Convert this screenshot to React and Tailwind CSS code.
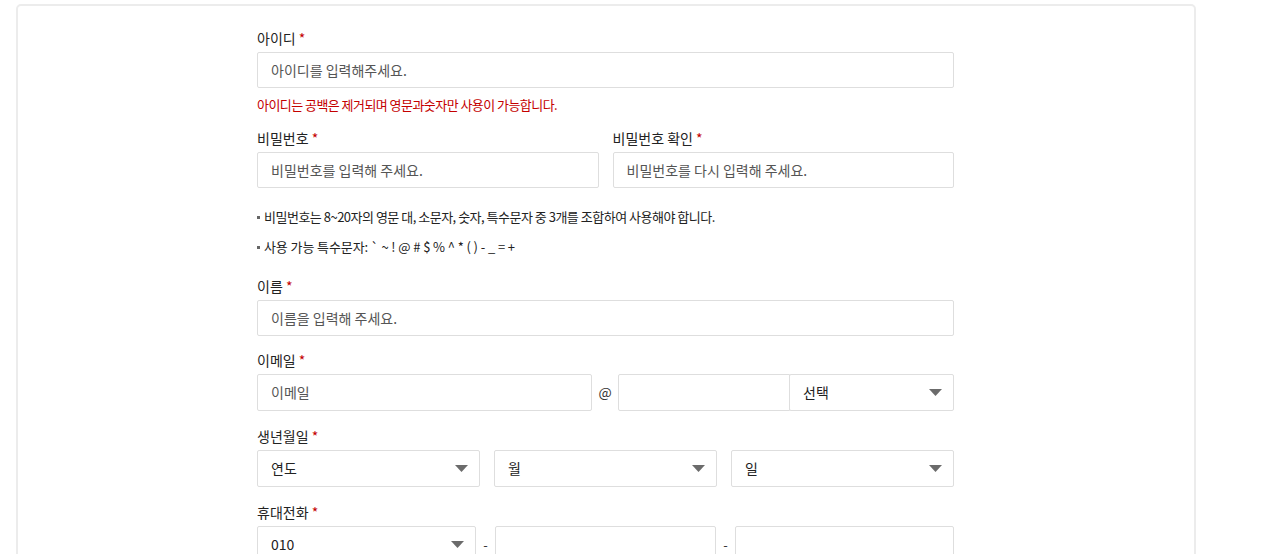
import React from "react";

const FONT = { fontFamily: '"Noto Sans CJK KR", "Noto Sans", sans-serif' };

function Label({ children }) {
  return (
    <div className="mb-1 h-5 text-[14px] leading-5 font-normal text-[#222]">
      {children} <span className="text-[#c40000]">*</span>
    </div>
  );
}

function TextBox({ placeholder = "", className = "h-9" }) {
  return (
    <div
      className={`flex items-center rounded-[2px] border border-[#dedede] bg-white px-[13px] text-[14px] text-[#555] ${className}`}
    >
      {placeholder}
    </div>
  );
}

function SelectBox({ value, className = "" }) {
  return (
    <div
      className={`flex h-[37px] items-center justify-between rounded-[2px] border border-[#dedede] bg-white pl-[13px] pr-[11px] text-[14px] text-[#222] ${className}`}
    >
      <span>{value}</span>
      <svg width="13" height="7" viewBox="0 0 13 7" aria-hidden="true">
        <path d="M0 0h13L6.5 7z" fill="#6b6b6b" />
      </svg>
    </div>
  );
}

function Note({ children, className = "tracking-[-0.5px]" }) {
  return (
    <div className={`flex h-5 items-center gap-[4px] text-[13px] leading-5 text-[#222] ${className}`}>
      <span className="h-[3px] w-[3px] bg-[#666]" />
      <span>{children}</span>
    </div>
  );
}

export default function App() {
  return (
    <div className="min-h-[554px] bg-white px-4 pt-1" style={FONT}>
      <div className="w-[1180px] rounded-[5px] border-2 border-[#ececec] bg-white pt-[22px] pb-10">
        <div className="ml-[239px] w-[697px]">
          <Label>아이디</Label>
          <TextBox placeholder="아이디를 입력해주세요." />
          <div className="mt-[7px] h-5 text-[13px] leading-5 tracking-[-0.55px] text-[#c40000]">
            아이디는 공백은 제거되며 영문과숫자만 사용이 가능합니다.
          </div>

          <div className="mt-[13px] grid grid-cols-2 gap-[14px]">
            <div>
              <Label>비밀번호</Label>
              <TextBox placeholder="비밀번호를 입력해 주세요." />
            </div>
            <div>
              <Label>비밀번호 확인</Label>
              <TextBox placeholder="비밀번호를 다시 입력해 주세요." />
            </div>
          </div>

          <div className="mt-[19px] flex flex-col gap-[10px]">
            <Note>비밀번호는 8~20자의 영문 대, 소문자, 숫자, 특수문자 중 3개를 조합하여 사용해야 합니다.</Note>
            <Note className="tracking-[-0.1px]">사용 가능 특수문자: ` ~ ! @ # $ % ^ * ( ) - _ = +</Note>
          </div>

          <div className="mt-[19px]">
            <Label>이름</Label>
            <TextBox placeholder="이름을 입력해 주세요." />
          </div>

          <div className="mt-[14px]">
            <Label>이메일</Label>
            <div className="flex items-center">
              <TextBox placeholder="이메일" className="h-[37px] w-[335px]" />
              <span className="w-[26px] text-center text-[14px] text-[#333]">@</span>
              <TextBox className="h-[37px] flex-1 rounded-r-none" />
              <SelectBox value="선택" className="-ml-px w-[165px]" />
            </div>
          </div>

          <div className="mt-[15px]">
            <Label>생년월일</Label>
            <div className="grid grid-cols-3 gap-[14px]">
              <SelectBox value="연도" />
              <SelectBox value="월" />
              <SelectBox value="일" />
            </div>
          </div>

          <div className="mt-[15px]">
            <Label>휴대전화</Label>
            <div className="grid grid-cols-[219px_19px_1fr_19px_219px] items-center">
              <SelectBox value="010" />
              <span className="text-center text-[13px] text-[#333]">-</span>
              <TextBox className="h-[37px]" />
              <span className="text-center text-[13px] text-[#333]">-</span>
              <TextBox className="h-[37px]" />
            </div>
          </div>
        </div>
      </div>
    </div>
  );
}
